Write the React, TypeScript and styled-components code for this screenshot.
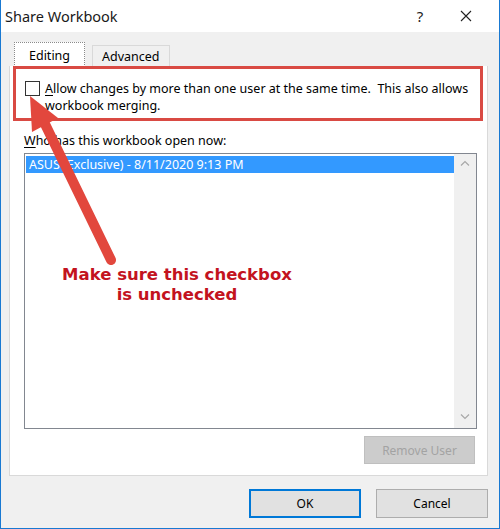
import React from 'react';
import styled, { createGlobalStyle } from 'styled-components';

const GlobalStyle = createGlobalStyle`
  html, body {
    margin: 0;
    padding: 0;
    background: #ffffff;
  }
  * {
    box-sizing: border-box;
  }
`;

const uiFont = `'Noto Sans', 'Open Sans', 'DejaVu Sans', sans-serif`;

const Window = styled.div`
  position: relative;
  width: 500px;
  height: 529px;
  display: flex;
  flex-direction: column;
  border: 1px solid #1979d2;
  border-top: none;
  background: #f0f0f0;
  font-family: ${uiFont};
  color: #000;
  overflow: hidden;
`;

const TitleBar = styled.div`
  height: 32px;
  flex: none;
  display: flex;
  align-items: center;
  background: #ffffff;
  padding-left: 4px;
`;

const Title = styled.div`
  flex: 1;
  font-size: 14.5px;
  color: #1a1a1a;
`;

const TitleButton = styled.div<{ w: number }>`
  width: ${(p) => p.w}px;
  height: 32px;
  display: flex;
  align-items: center;
  justify-content: center;
  font-size: 15px;
  color: #222;
`;

const Body = styled.div`
  flex: 1;
  display: flex;
  flex-direction: column;
  padding: 10px 11px 10px 8px;
`;

const TabRow = styled.div`
  display: flex;
  align-items: flex-end;
  padding-left: 5px;
  gap: 7px;
  height: 24px;
`;

const Tab = styled.div<{ active?: boolean }>`
  height: ${(p) => (p.active ? 25 : 21)}px;
  padding: 0 ${(p) => (p.active ? 14 : 9)}px;
  display: flex;
  align-items: center;
  font-size: 12.5px;
  background: ${(p) => (p.active ? '#ffffff' : '#f0f0f0')};
  border: 1px ${(p) => (p.active ? 'dotted #8a8a8a' : 'solid #d9d9d9')};
  border-bottom: none;
  margin-bottom: ${(p) => (p.active ? -1 : 0)}px;
  position: relative;
  z-index: ${(p) => (p.active ? 2 : 1)};
`;

const Panel = styled.div`
  width: 479px;
  height: 410px;
  background: #ffffff;
  border: 1px solid #d9d9d9;
  border-top: none;
  display: flex;
  flex-direction: column;
  position: relative;
`;

const Highlight = styled.div`
  margin: 0 4px 0 3px;
  height: 55px;
  border: 3px solid #d94a43;
  display: flex;
  align-items: flex-start;
  padding: 12px 0 0 9px;
  position: relative;
  z-index: 3;
`;

const CheckBox = styled.div`
  width: 15px;
  height: 15px;
  border: 1px solid #333333;
  background: #ffffff;
  flex: none;
`;

const OptionText = styled.div`
  margin-left: 5px;
  margin-top: -1px;
  font-size: 12.5px;
  line-height: 17px;
  white-space: pre;
`;

const Key = styled.span`
  text-decoration: underline;
  text-underline-offset: 2px;
`;

const Label = styled.div`
  margin: 11px 0 0 14px;
  font-size: 12.5px;
  line-height: 17px;
`;

const ListBox = styled.div`
  position: relative;
  margin: 4px 10px 0 14px;
  height: 276px;
  border: 1px solid #828790;
  display: flex;
  background: #ffffff;
`;

const ListItems = styled.div`
  flex: 1;
  padding: 2px 0 0 1px;
`;

const ListRow = styled.div<{ selected?: boolean }>`
  height: 17px;
  padding-left: 3px;
  display: flex;
  align-items: center;
  font-size: 12.5px;
  color: ${(p) => (p.selected ? '#ffffff' : '#000000')};
  background: ${(p) => (p.selected ? '#3399ff' : 'transparent')};
`;

const ScrollBar = styled.div`
  width: 22px;
  background: #f0f0f0;
  display: flex;
  flex-direction: column;
  justify-content: space-between;
  align-items: center;
  padding: 6px 0 8px;
`;

const Annotation = styled.div`
  position: absolute;
  left: 33px;
  top: 111px;
  width: 238px;
  text-align: center;
  font-family: 'DejaVu Sans', Verdana, sans-serif;
  font-weight: bold;
  font-size: 16.5px;
  line-height: 20px;
  color: #c3131e;
`;

const PanelActions = styled.div`
  display: flex;
  justify-content: flex-end;
  padding: 7px 12px 0 0;
`;

const Button = styled.div<{ variant?: 'default' | 'disabled' }>`
  width: ${(p) => (p.variant === 'disabled' ? 111 : 112)}px;
  height: ${(p) => (p.variant === 'disabled' ? 28 : 29)}px;
  display: flex;
  align-items: center;
  justify-content: center;
  font-size: 12px;
  background: ${(p) => (p.variant === 'disabled' ? '#cccccc' : '#e1e1e1')};
  color: ${(p) => (p.variant === 'disabled' ? '#a3a3a3' : '#000000')};
  border: ${(p) =>
    p.variant === 'default' ? '2px solid #0078d7' : p.variant === 'disabled' ? '1px solid #bfbfbf' : '1px solid #adadad'};
`;

const Footer = styled.div`
  margin-top: auto;
  display: flex;
  justify-content: flex-end;
  gap: 15px;
`;

const ArrowLayer = styled.svg`
  position: absolute;
  left: 0;
  top: 0;
  pointer-events: none;
  z-index: 10;
`;

function Chevron({ up }: { up?: boolean }) {
  return (
    <svg width="10" height="6" viewBox="0 0 10 6">
      <polyline
        points={up ? '1,5.5 5,1.5 9,5.5' : '1,0.5 5,4.5 9,0.5'}
        fill="none"
        stroke="#a8a8a8"
        strokeWidth="1.2"
      />
    </svg>
  );
}

export default function App() {
  return (
    <>
      <GlobalStyle />
      <Window>
        <TitleBar>
          <Title>Share Workbook</Title>
          <TitleButton w={46}>?</TitleButton>
          <TitleButton w={46} style={{ marginRight: 10 }}>
            <svg width="12" height="12" viewBox="0 0 12 12">
              <path d="M1 1 L11 11 M11 1 L1 11" stroke="#222" strokeWidth="1.1" />
            </svg>
          </TitleButton>
        </TitleBar>
        <Body>
          <TabRow>
            <Tab active>Editing</Tab>
            <Tab>Advanced</Tab>
          </TabRow>
          <Panel>
            <Highlight>
              <CheckBox />
              <OptionText>
                <Key>A</Key>
                {'llow changes by more than one user at the same time.  This also allows\nworkbook merging.'}
              </OptionText>
            </Highlight>
            <Label>
              <Key>W</Key>ho has this workbook open now:
            </Label>
            <ListBox>
              <ListItems>
                <ListRow selected>ASUS (Exclusive) - 8/11/2020 9:13 PM</ListRow>
              </ListItems>
              <ScrollBar>
                <Chevron up />
                <Chevron />
              </ScrollBar>
              <Annotation>
                Make sure this checkbox
                <br />
                is unchecked
              </Annotation>
            </ListBox>
            <PanelActions>
              <Button variant="disabled">Remove User</Button>
            </PanelActions>
          </Panel>
          <Footer>
            <Button variant="default">OK</Button>
            <Button>Cancel</Button>
          </Footer>
        </Body>
        <ArrowLayer width="500" height="529" viewBox="0 0 500 529">
          <line x1="44" y1="124" x2="110" y2="260" stroke="#e2473d" strokeWidth="10" strokeLinecap="round" />
          <polygon points="29,96 57,118 31,132" fill="#e2473d" />
        </ArrowLayer>
      </Window>
    </>
  );
}
